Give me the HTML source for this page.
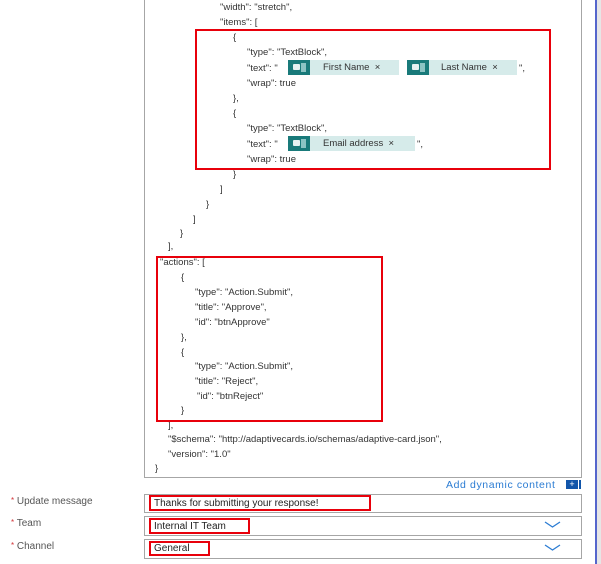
<!DOCTYPE html>
<html><head><meta charset="utf-8"><style>
body{margin:0;width:601px;height:564px;background:#fff;position:relative;overflow:hidden;font-family:"Liberation Sans",sans-serif;color:#333;}
.a{position:absolute;white-space:nowrap;}
.t{font-size:9.5px;line-height:12px;}
.box{position:absolute;border:1px solid #a6a6a6;}
.red{position:absolute;border:2px solid #e8000b;}
.chip{position:absolute;height:15px;background:#d6ebea;font-size:9.5px;line-height:15px;color:#333;}
.ic{position:absolute;left:0;top:0;width:22px;height:15px;background:#197a7a;}
.ic:after{content:"";position:absolute;left:5px;top:4px;width:7px;height:6px;background:#e6f2f2;border-radius:1px;}
.ic:before{content:"";position:absolute;left:13px;top:3px;width:5px;height:9px;background:#8cc4c4;}
.lbl{font-size:10px;color:#555;}
.lbl b{color:#d13438;font-weight:normal;font-size:8px;vertical-align:top;}
.chev{position:absolute;}
</style></head><body>
<div class="box" style="left:144px;top:-2px;width:436px;height:478px;"></div>
<div style="position:absolute;left:595px;top:0;width:2px;height:564px;background:#5566cc"></div>
<div style="position:absolute;left:597px;top:0;width:4px;height:564px;background:#e6e6e6"></div>

<div class="a t" style="left:220px;top:2px">"width": "stretch",</div>
<div class="a t" style="left:220px;top:17px">"items": [</div>
<div class="a t" style="left:233px;top:32px">{</div>
<div class="a t" style="left:247px;top:47px">"type": "TextBlock",</div>
<div class="a t" style="left:247px;top:63px">"text": "</div>
<div class="chip" style="left:288px;top:60px;width:111px"><div class="ic"></div><span style="position:absolute;left:35px">First Name&nbsp; ×</span></div>
<div class="chip" style="left:407px;top:60px;width:110px"><div class="ic"></div><span style="position:absolute;left:34px">Last Name&nbsp; ×</span></div>
<div class="a t" style="left:519px;top:63px">",</div>
<div class="a t" style="left:247px;top:78px">"wrap": true</div>
<div class="a t" style="left:233px;top:93px">},</div>
<div class="a t" style="left:233px;top:108px">{</div>
<div class="a t" style="left:247px;top:123px">"type": "TextBlock",</div>
<div class="a t" style="left:247px;top:139px">"text": "</div>
<div class="chip" style="left:288px;top:136px;width:127px"><div class="ic"></div><span style="position:absolute;left:35px">Email address&nbsp; ×</span></div>
<div class="a t" style="left:417px;top:139px">",</div>
<div class="a t" style="left:247px;top:154px">"wrap": true</div>
<div class="a t" style="left:233px;top:169px">}</div>
<div class="a t" style="left:220px;top:184px">]</div>
<div class="a t" style="left:206px;top:199px">}</div>
<div class="a t" style="left:193px;top:214px">]</div>
<div class="a t" style="left:180px;top:228px">}</div>
<div class="a t" style="left:168px;top:241px">],</div>
<div class="a t" style="left:160px;top:257px">"actions": [</div>
<div class="a t" style="left:181px;top:272px">{</div>
<div class="a t" style="left:195px;top:287px">"type": "Action.Submit",</div>
<div class="a t" style="left:195px;top:302px">"title": "Approve",</div>
<div class="a t" style="left:195px;top:317px">"id": "btnApprove"</div>
<div class="a t" style="left:181px;top:332px">},</div>
<div class="a t" style="left:181px;top:347px">{</div>
<div class="a t" style="left:195px;top:361px">"type": "Action.Submit",</div>
<div class="a t" style="left:195px;top:376px">"title": "Reject",</div>
<div class="a t" style="left:197px;top:391px">"id": "btnReject"</div>
<div class="a t" style="left:181px;top:405px">}</div>
<div class="a t" style="left:168px;top:420px">],</div>
<div class="a t" style="left:168px;top:434px">"$schema": "http://adaptivecards.io/schemas/adaptive-card.json",</div>
<div class="a t" style="left:168px;top:449px">"version": "1.0"</div>
<div class="a t" style="left:155px;top:463px">}</div>

<div class="red" style="left:195px;top:29px;width:352px;height:137px"></div>
<div class="red" style="left:156px;top:256px;width:223px;height:162px"></div>

<div class="a" style="left:446px;top:479px;font-size:10.5px;letter-spacing:0.6px;color:#2b7cd3">Add dynamic content</div>
<div style="position:absolute;left:566px;top:480px;width:12px;height:9px;background:#1155aa;color:#fff;font-size:9px;line-height:9px;text-align:center">+</div>
<div style="position:absolute;left:579px;top:480px;width:2px;height:9px;background:#1155aa"></div>

<div class="a lbl" style="left:11px;top:496px"><b>*</b> Update message</div>
<div class="a lbl" style="left:11px;top:518px"><b>*</b> Team</div>
<div class="a lbl" style="left:11px;top:541px"><b>*</b> Channel</div>

<div class="box" style="left:144px;top:494px;width:436px;height:17px"></div>
<div class="box" style="left:144px;top:516px;width:436px;height:18px"></div>
<div class="box" style="left:144px;top:539px;width:436px;height:18px"></div>

<div class="red" style="left:149px;top:495px;width:218px;height:12px"></div>
<div class="a" style="left:154px;top:498px;font-size:10px;color:#222">Thanks for submitting your response!</div>
<div class="red" style="left:149px;top:518px;width:97px;height:12px"></div>
<div class="a" style="left:154px;top:521px;font-size:10px;color:#222">Internal IT Team</div>
<div class="red" style="left:149px;top:541px;width:57px;height:11px"></div>
<div class="a" style="left:154px;top:543px;font-size:10px;color:#222">General</div>
<svg class="chev" style="left:544px;top:520px" width="18" height="9"><polyline points="1,2 8.5,7 16,2" fill="none" stroke="#2b7cd3" stroke-width="1.3"/></svg>
<svg class="chev" style="left:544px;top:543px" width="18" height="9"><polyline points="1,2 8.5,7 16,2" fill="none" stroke="#2b7cd3" stroke-width="1.3"/></svg>
</body></html>
